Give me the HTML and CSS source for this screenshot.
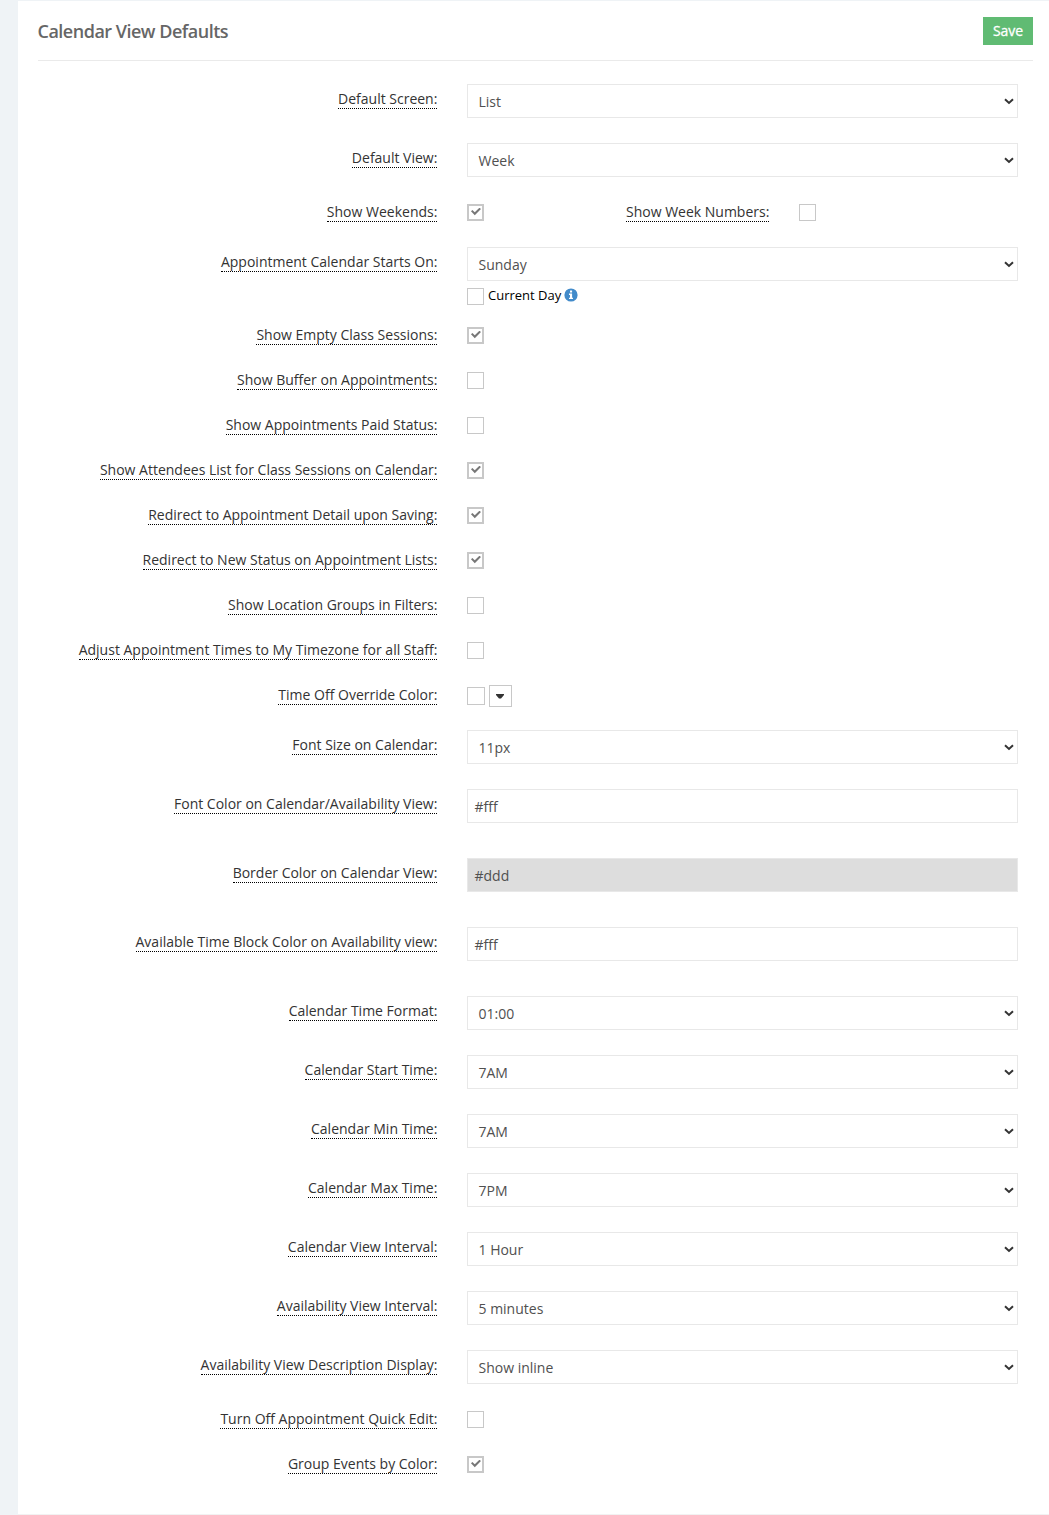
FILE: index.html
```html
<!DOCTYPE html>
<html lang="en">
<head>
<meta charset="utf-8">
<title>Calendar View Defaults</title>
<link rel="stylesheet" href="styles.css">
</head>
<body>
<svg class="sprite" aria-hidden="true">
  <symbol id="chevron" viewBox="0 0 10 7"><path d="M1 1.3 5 5 9 1.3" fill="none" stroke="#333" stroke-width="2"/></symbol>
  <symbol id="info" viewBox="0 0 14 14"><circle cx="7" cy="7" r="6.6" fill="#428bca"/><path d="M6 2.6h2.1v1.8H6zM5 5.6h3.1v4.1H9v1.3H5V9.700h1V6.900H5z" fill="#fff"/></symbol>
</svg>
<main class="panel">
  <header class="panel-head">
    <h1>Calendar View Defaults</h1>
    <button class="save" type="button">Save</button>
  </header>
  <form class="form">
    <div class="row"><div class="label"><span>Default Screen:</span></div><div class="select"><select><option>List</option></select><svg><use href="#chevron"/></svg></div></div>
    <div class="row"><div class="label"><span>Default View:</span></div><div class="select"><select><option>Week</option></select><svg><use href="#chevron"/></svg></div></div>
    <div class="row check"><div class="label"><span>Show Weekends:</span></div><div class="pair"><input type="checkbox" checked><div class="label"><span>Show Week Numbers:</span></div><input type="checkbox"></div></div>
    <div class="row start-day"><div class="label"><span>Appointment Calendar Starts On:</span></div><div><div class="select"><select><option>Sunday</option></select><svg><use href="#chevron"/></svg></div><label class="current"><input type="checkbox"><span>Current Day</span><svg><use href="#info"/></svg></label></div></div>
    <div class="row check"><div class="label"><span>Show Empty Class Sessions:</span></div><input type="checkbox" checked></div>
    <div class="row check"><div class="label"><span>Show Buffer on Appointments:</span></div><input type="checkbox"></div>
    <div class="row check"><div class="label"><span>Show Appointments Paid Status:</span></div><input type="checkbox"></div>
    <div class="row check"><div class="label"><span>Show Attendees List for Class Sessions on Calendar:</span></div><input type="checkbox" checked></div>
    <div class="row check"><div class="label"><span>Redirect to Appointment Detail upon Saving:</span></div><input type="checkbox" checked></div>
    <div class="row check"><div class="label"><span>Redirect to New Status on Appointment Lists:</span></div><input type="checkbox" checked></div>
    <div class="row check"><div class="label"><span>Show Location Groups in Filters:</span></div><input type="checkbox"></div>
    <div class="row check"><div class="label"><span>Adjust Appointment Times to My Timezone for all Staff:</span></div><input type="checkbox"></div>
    <div class="row check"><div class="label"><span>Time Off Override Color:</span></div><div class="picker"><span class="swatch"></span><button type="button" class="drop" aria-label="Choose color"><svg viewBox="0 0 8 5"><path d="M0 0h8v1L5 4.500H3L0 1z" fill="#333"/></svg></button></div></div>
    <div class="row"><div class="label"><span>Font Size on Calendar:</span></div><div class="select"><select><option>11px</option></select><svg><use href="#chevron"/></svg></div></div>
    <div class="row color"><div class="label"><span>Font Color on Calendar/Availability View:</span></div><input class="text" type="text" value="#fff"></div>
    <div class="row color"><div class="label"><span>Border Color on Calendar View:</span></div><input class="text grey" type="text" value="#ddd"></div>
    <div class="row color"><div class="label"><span>Available Time Block Color on Availability view:</span></div><input class="text" type="text" value="#fff"></div>
    <div class="row"><div class="label"><span>Calendar Time Format:</span></div><div class="select"><select><option>01:00</option></select><svg><use href="#chevron"/></svg></div></div>
    <div class="row"><div class="label"><span>Calendar Start Time:</span></div><div class="select"><select><option>7AM</option></select><svg><use href="#chevron"/></svg></div></div>
    <div class="row"><div class="label"><span>Calendar Min Time:</span></div><div class="select"><select><option>7AM</option></select><svg><use href="#chevron"/></svg></div></div>
    <div class="row"><div class="label"><span>Calendar Max Time:</span></div><div class="select"><select><option>7PM</option></select><svg><use href="#chevron"/></svg></div></div>
    <div class="row"><div class="label"><span>Calendar View Interval:</span></div><div class="select"><select><option>1 Hour</option></select><svg><use href="#chevron"/></svg></div></div>
    <div class="row"><div class="label"><span>Availability View Interval:</span></div><div class="select"><select><option>5 minutes</option></select><svg><use href="#chevron"/></svg></div></div>
    <div class="row"><div class="label"><span>Availability View Description Display:</span></div><div class="select"><select><option>Show inline</option></select><svg><use href="#chevron"/></svg></div></div>
    <div class="row check"><div class="label"><span>Turn Off Appointment Quick Edit:</span></div><input type="checkbox"></div>
    <div class="row check"><div class="label"><span>Group Events by Color:</span></div><input type="checkbox" checked></div>
  </form>
</main>
</body>
</html>
```
FILE: styles.css
```css
* { box-sizing: border-box; }
body {
  margin: 0;
  background: #eff3f6;
  font: 14px/20px "Open Sans", "Noto Sans", sans-serif;
  color: #333;
}
.sprite { display: none; }
.panel {
  margin: 1px 0 0 18px;
  height: 1514px;
  padding: 0 16px 0 20px;
  background: #fff;
  border-bottom: 1px solid #f2f2f2;
}
.panel-head {
  display: flex;
  justify-content: space-between;
  align-items: center;
  height: 60px;
  border-bottom: 1px solid #eaeaea;
}
h1 {
  margin: 0 0 0 -.5px;
  font-size: 18px;
  line-height: 24px;
  font-weight: 600;
  letter-spacing: -.5px;
  color: #666;
}
.save {
  width: 50px;
  height: 28px;
  padding: 0;
  border: 0;
  background: #60bb73;
  color: #fff;
  font: 400 14px/28px "Open Sans", sans-serif;
  letter-spacing: -.1px;
  -webkit-text-stroke: .3px #fff;
}
.form { padding-top: 23px; }
.row {
  display: grid;
  grid-template-columns: 399.4px 551px;
  column-gap: 29.6px;
  align-items: start;
  height: 59px;
}
.row.color { height: 69px; }
.row.check { height: 50px; margin-top: -5px; }
.row.start-day { height: 78px; }
.label { padding-top: 5px; text-align: right; white-space: nowrap; }
.label span {
  display: inline-block;
  height: 20px;
  border-bottom: 1px dotted #000;
}
.select { display: grid; align-items: center; }
.select select, .select svg { grid-area: 1 / 1; }
.select svg { width: 10px; height: 7px; justify-self: end; margin-right: 4px; pointer-events: none; }
select, .text {
  appearance: none;
  width: 100%;
  height: 34px;
  margin: 0;
  border: 1px solid #e8e8e8;
  border-radius: 0;
  background: #fff;
  color: #505050;
  font: inherit;
}
select { padding: 2px 10px 0 10.5px; }
.text { padding: 0 6px 0 6.5px; }
.text.grey { background: #ddd; }
input[type="checkbox"] {
  appearance: none;
  display: block;
  width: 17px;
  height: 17px;
  margin: 7px 0 0;
  border: 1px solid #c8c8c8;
  background: #fff;
}
input[type="checkbox"]:checked { border-width: 2px; }
input[type="checkbox"]:checked::before {
  content: "";
  display: block;
  width: 10px;
  height: 8px;
  margin: 1.5px 0 0 2px;
  background: #777;
  clip-path: polygon(0 48%, 14% 30%, 38% 58%, 84% 2%, 100% 20%, 38% 97%);
}
.pair { display: grid; grid-template-columns: 17px 285.4px 17px; }
.pair input:last-child { margin-left: 29.6px; }
.current { display: flex; align-items: center; height: 30px; color: #000; font-size: 13px; }
.current input[type="checkbox"] { margin: 1px 4px 0 0; }
.current span { margin-top: -2px; }
.current svg { width: 14px; height: 14px; margin-left: 3px; margin-top: -3px; }
.picker { display: flex; gap: 4px; align-items: center; padding-top: 5px; }
.swatch { width: 18px; height: 18px; border: 1px solid #c8c8c8; }
.drop {
  display: grid;
  place-items: center;
  width: 23px;
  height: 22px;
  padding: 0 1px 0 0;
  border: 1px solid #c8c8c8;
  background: #fff;
}
.drop svg { width: 8px; height: 5px; }
```
